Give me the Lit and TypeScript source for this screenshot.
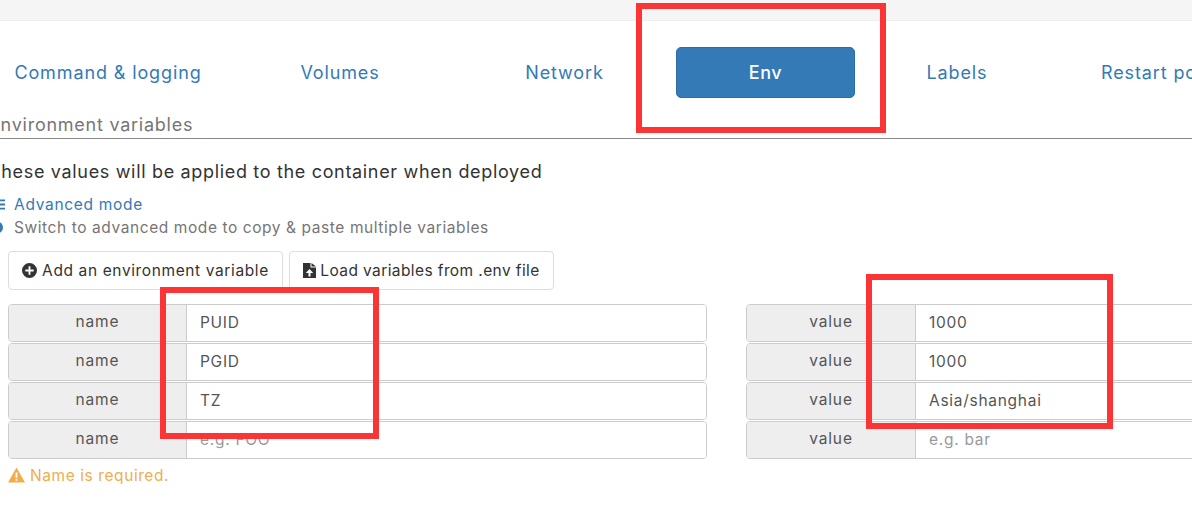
import { LitElement, html, css, svg } from "lit";
import { customElement } from "lit/decorators.js";

const rows = [
  { name: "PUID", value: "1000" },
  { name: "PGID", value: "1000" },
  { name: "TZ", value: "Asia/shanghai" },
  { name: "", value: "" },
];
const tabs = ["Command & logging", "Volumes", "Network", "Env", "Labels", "Restart policy"];

@customElement("app-root")
export class AppRoot extends LitElement {
  static styles = css`
    :host { display: block; width: 1192px; height: 520px; position: relative; overflow: hidden; background: #fff; font-family: Inter, "Liberation Sans", sans-serif; color: #333; letter-spacing: 0.58px; }
    .top { height: 20px; background: #f5f5f5; border-bottom: 1px solid #eeeeee; }
    .tabs { display: grid; grid-template-columns: 238px 226px 223px 179px 204px 300px; margin: 26px 0 0 -11px; height: 51px; align-items: center; width: 1300px; }
    .tab { display: flex; align-items: center; justify-content: center; height: 51px; font-size: 18px; font-weight: 400; color: #337ab7; box-sizing: border-box; white-space: nowrap; letter-spacing: 0.88px; }
    .tab.active { background: #337ab7; color: #fff; border: 1px solid #2e6da4; border-radius: 5px; font-weight: 500; letter-spacing: 0.6px; }
    .tab.last { justify-content: flex-start; padding-left: 42px; }
    .heading { margin: 15px 0 0 -11px; height: 25px; line-height: 24px; font-size: 18px; font-weight: 400; color: #767676; white-space: nowrap; letter-spacing: 0.75px; }
    .rule { height: 1px; background: #888; }
    .lead { margin: 22px 0 0 -11px; height: 21px; line-height: 22px; font-size: 18px; font-weight: 400; color: #333; white-space: nowrap; letter-spacing: 0.67px; }
    .mode { display: flex; align-items: center; gap: 6px; height: 20px; font-size: 15.5px; white-space: nowrap; margin-left: -5px; }
    .mode svg { flex: none; width: 13px; height: 13px; }
    .mode.link { margin-top: 12px; color: #337ab7; font-weight: 400; letter-spacing: 0.7px; }
    .mode.hint { margin-top: 3px; color: #767676; }
    .buttons { display: flex; gap: 6px; margin: 14px 0 0 8px; }
    .btn { display: flex; align-items: center; justify-content: center; gap: 5px; height: 39px; box-sizing: border-box; border: 1px solid #ddd; border-radius: 4px; background: #fff; font-size: 15.5px; font-weight: 400; color: #333; white-space: nowrap; letter-spacing: 0.62px; }
    .btn svg { flex: none; width: 15px; height: 15px; }
    .btn.add { width: 275px; }
    .btn.load { width: 265px; letter-spacing: 0.4px; gap: 4px; }
    .btn.load svg { width: 13px; }
    .table { display: flex; flex-direction: column; gap: 1px; margin: 14px 0 0 8px; }
    .row { display: flex; gap: 39px; width: 1300px; }
    .group { display: flex; height: 38px; box-sizing: border-box; border: 1px solid #ccc; border-radius: 4px; font-size: 15.5px; overflow: hidden; letter-spacing: 0.72px; }
    .group.left { width: 699px; }
    .group.right { width: 560px; }
    .addon { flex: none; box-sizing: border-box; display: flex; align-items: center; justify-content: center; padding-bottom: 4px; background: #eee; border-right: 1px solid #ccc; color: #555; font-weight: 400; letter-spacing: 0.85px; }
    .left .addon { width: 178px; }
    .right .addon { width: 169px; }
    .cell { flex: 1; display: flex; align-items: center; padding: 0 0 2px 13px; background: #fff; color: #555; font-weight: 400; }
    .cell.ph { color: #999; }
    .warn { display: flex; align-items: center; gap: 5px; margin: 6px 0 0 8px; height: 20px; font-size: 15.5px; color: #f0ad4e; font-weight: 400; letter-spacing: 0.58px; }
    .warn svg { flex: none; width: 17px; height: 16px; }
    .mark { position: absolute; box-sizing: border-box; border: 6px solid #fb3535; }
    .m1 { left: 636px; top: 3px; width: 250px; height: 130px; }
    .m2 { left: 160px; top: 287px; width: 219px; height: 152px; }
    .m3 { left: 866px; top: 274px; width: 247px; height: 155px; }
  `;

  render() {
    return html`
      <div class="top"></div>
      <div class="tabs">
        ${tabs.map((t, i) => html`<div class="tab ${i === 3 ? "active" : ""} ${i === 5 ? "last" : ""}">${t}</div>`)}
      </div>
      <div class="heading">Environment variables</div>
      <div class="rule"></div>
      <div class="lead">These values will be applied to the container when deployed</div>
      <div class="mode link">
        <svg viewBox="0 0 13 13">${svg`<path d="M0 1.500h10v1.800H0zM0 5.600h10v1.800H0zM0 9.700h10v1.800H0z" fill="#337ab7"/>`}</svg>
        <span>Advanced mode</span>
      </div>
      <div class="mode hint">
        <svg viewBox="0 0 13 13">${svg`<circle cx="2" cy="6.500" r="6" fill="#337ab7"/>`}</svg>
        <span>Switch to advanced mode to copy &amp; paste multiple variables</span>
      </div>
      <div class="buttons">
        <div class="btn add">
          <svg viewBox="0 0 16 16">${svg`<path fill-rule="evenodd" fill="#333" d="M8 0a8 8 0 1 0 0 16A8 8 0 0 0 8 0zM7 3.500h2V7h3.500v2H9v3.500H7V9H3.500V7H7z"/>`}</svg>
          <span>Add an environment variable</span>
        </div>
        <div class="btn load">
          <svg viewBox="0 0 13 15" preserveAspectRatio="none">${svg`<path fill-rule="evenodd" fill="#333" d="M0 0h7.500v4.500H13V15H0zM8.500 0 13 3.500H8.500zM6.500 6 2.800 10H5.500v3.500h2V10h2.700z"/>`}</svg>
          <span>Load variables from .env file</span>
        </div>
      </div>
      <div class="table">
        ${rows.map(
          (r) => html`<div class="row">
            <div class="group left">
              <div class="addon">name</div>
              <div class="cell ${r.name ? "" : "ph"}">${r.name || "e.g. FOO"}</div>
            </div>
            <div class="group right">
              <div class="addon">value</div>
              <div class="cell ${r.value ? "" : "ph"}">${r.value || "e.g. bar"}</div>
            </div>
          </div>`
        )}
      </div>
      <div class="warn">
        <svg viewBox="0 0 17 16">${svg`<path fill-rule="evenodd" fill="#f0ad4e" d="M8.500 0.500 17 15.500H0zM7.600 5.500h1.800v5.300H7.600zM7.600 12h1.800v1.800H7.600z"/>`}</svg>
        <span>Name is required.</span>
      </div>
      <div class="mark m1"></div>
      <div class="mark m2"></div>
      <div class="mark m3"></div>
    `;
  }
}
